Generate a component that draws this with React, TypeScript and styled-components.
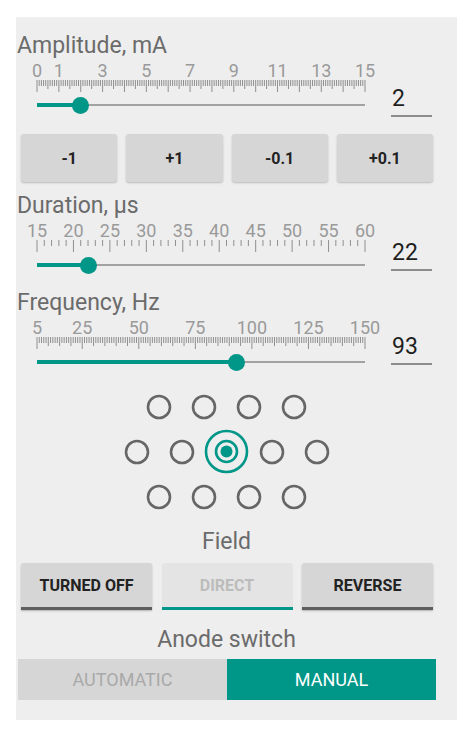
import React from "react";
import styled, { createGlobalStyle } from "styled-components";

const TEAL = "#009688";
const SCALE_W = 328;

const GlobalStyle = createGlobalStyle`
  html, body {
    margin: 0;
    padding: 0;
    background: #ffffff;
    font-family: Roboto, "Noto Sans", sans-serif;
  }
  * {
    box-sizing: border-box;
  }
`;

const Panel = styled.div`
  margin: 17px 0 0 16px;
  width: 441px;
  background: #eeeeee;
  padding: 16px 20px 20px 0;
  display: flex;
  flex-direction: column;
`;

const Block = styled.section<{ $top: number }>`
  margin-top: ${p => p.$top}px;
  display: flex;
  flex-direction: column;
`;

const Title = styled.h2`
  margin: 0 0 2px 1px;
  font-weight: 400;
  font-size: 23px;
  line-height: 26px;
  color: #6b6b6b;
`;

const SliderRow = styled.div`
  display: flex;
`;

const ScaleCol = styled.div`
  margin-left: 21px;
  width: ${SCALE_W}px;
  display: flex;
  flex-direction: column;
`;

const RulerSvg = styled.svg`
  display: block;
  overflow: visible;
`;

const Track = styled.div`
  height: 24px;
  display: flex;
  align-items: center;
`;

const Fill = styled.div`
  height: 4px;
  background: ${TEAL};
`;

const Thumb = styled.div`
  width: 17px;
  height: 17px;
  margin: 0 -8.5px;
  border-radius: 50%;
  background: ${TEAL};
  position: relative;
  z-index: 1;
`;

const Rest = styled.div`
  flex: 1;
  height: 2px;
  background: #a2a2a2;
`;

const ValueField = styled.div<{ $drop: number }>`
  margin-left: 26px;
  width: 41px;
  align-self: flex-end;
  margin-bottom: ${p => p.$drop}px;
  padding: 0 0 3px 1px;
  border-bottom: 2px solid #8c8c8c;
  font-size: 23px;
  line-height: 26px;
  color: #1e1e1e;
`;

const StepRow = styled.div`
  margin-top: 17px;
  padding: 0 4px 0 5px;
  display: flex;
  gap: 9px;
`;

const StepButton = styled.button`
  flex: 1;
  height: 48px;
  border: none;
  border-radius: 3px;
  background: #d6d6d6;
  box-shadow: 0 1px 2px rgba(0, 0, 0, 0.22);
  font-family: Roboto, sans-serif;
  font-weight: 700;
  font-size: 16px;
  color: #222222;
`;

const Electrodes = styled.div`
  margin-top: 10px;
  display: flex;
  flex-direction: column;
`;

const ElectrodeRow = styled.div`
  display: flex;
  justify-content: center;
`;

const Cell = styled.div`
  width: 45px;
  height: 45px;
  display: flex;
  align-items: center;
  justify-content: center;
`;

const Caption = styled.div<{ $top: number }>`
  margin-top: ${p => p.$top}px;
  text-align: center;
  font-size: 23px;
  line-height: 26px;
  color: #6b6b6b;
`;

const FieldRow = styled.div`
  margin-top: 8px;
  padding: 0 4px 0 5px;
  display: flex;
  gap: 9.5px;
`;

const FieldButton = styled.button<{ $selected?: boolean }>`
  flex: 1;
  height: 47px;
  border: none;
  border-radius: 3px 3px 0 0;
  border-bottom: 3px solid ${p => (p.$selected ? TEAL : "#5e5e5e")};
  background: ${p => (p.$selected ? "#e4e4e4" : "#d6d6d6")};
  box-shadow: ${p => (p.$selected ? "none" : "0 1px 2px rgba(0, 0, 0, 0.25)")};
  font-family: Roboto, sans-serif;
  font-weight: 700;
  font-size: 16px;
  color: ${p => (p.$selected ? "#bcbcbc" : "#222222")};
  padding-top: 2px;
`;

const Switch = styled.div`
  margin-top: 6px;
  padding: 0 1px 0 2px;
  display: flex;
`;

const SwitchTab = styled.button<{ $on?: boolean }>`
  flex: 1;
  height: 41px;
  border: none;
  border-radius: 0;
  background: ${p => (p.$on ? TEAL : "#d6d6d6")};
  color: ${p => (p.$on ? "#ffffff" : "#a9a9a9")};
  font-family: Roboto, sans-serif;
  font-size: 18px;
  font-weight: 400;
`;

type RulerProps = {
  count: number;
  toPos: (i: number) => number;
  kind: (i: number) => 0 | 1 | 2;
  labels: { value: string; pos: number }[];
};

const Ruler = ({ count, toPos, kind, labels }: RulerProps) => {
  const ticks = [];
  for (let i = 0; i <= count; i++) {
    const x = toPos(i) * SCALE_W;
    const k = kind(i);
    const h = k === 2 ? 12 : k === 1 ? 9 : 6;
    ticks.push(
      <line key={i} x1={x} x2={x} y1={19} y2={19 + h} stroke="#8f8f8f" strokeWidth={1} />
    );
  }
  return (
    <RulerSvg width={SCALE_W} height={32}>
      {labels.map(l => (
        <text
          key={l.value}
          x={l.pos * SCALE_W}
          y={16}
          textAnchor="middle"
          fontSize={18}
          fontFamily="Roboto, sans-serif"
          fill="#9a9a9a"
        >
          {l.value}
        </text>
      ))}
      {ticks}
    </RulerSvg>
  );
};

type SliderBlockProps = {
  title: string;
  top: number;
  min: number;
  max: number;
  value: number;
  drop: number;
  ruler: RulerProps;
};

const SliderBlock = ({ title, top, min, max, value, drop, ruler }: SliderBlockProps) => {
  const pct = ((value - min) / (max - min)) * 100;
  return (
    <Block $top={top}>
      <Title>{title}</Title>
      <SliderRow>
        <ScaleCol>
          <Ruler {...ruler} />
          <Track>
            <Fill style={{ width: `${pct}%` }} />
            <Thumb />
            <Rest />
          </Track>
        </ScaleCol>
        <ValueField $drop={drop}>{value}</ValueField>
      </SliderRow>
    </Block>
  );
};

const Electrode = ({ active }: { active?: boolean }) =>
  active ? (
    <svg width="45" height="45" viewBox="0 0 45 45">
      <circle cx="22.5" cy="22.5" r="20.5" fill="none" stroke={TEAL} strokeWidth="2.6" />
      <circle cx="22.5" cy="22.5" r="10.5" fill="none" stroke={TEAL} strokeWidth="2.6" />
      <circle cx="22.5" cy="22.5" r="6" fill={TEAL} />
    </svg>
  ) : (
    <svg width="26" height="26" viewBox="0 0 26 26">
      <circle cx="13" cy="13" r="11" fill="none" stroke="#666666" strokeWidth="2.6" />
    </svg>
  );

const ampLabels = [0, 1, 3, 5, 7, 9, 11, 13, 15].map(v => ({ value: String(v), pos: v / 15 }));
const durLabels = [15, 20, 25, 30, 35, 40, 45, 50, 55, 60].map(v => ({
  value: String(v),
  pos: (v - 15) / 45,
}));
const freqValues = [5, 25, 50, 75, 100, 125, 150];
const freqLabels = freqValues.map(v => ({ value: String(v), pos: (v - 5) / 145 }));

export default function App() {
  return (
    <>
      <GlobalStyle />
      <Panel>
        <SliderBlock
          title="Amplitude, mA"
          top={0}
          min={0}
          max={15}
          value={2}
          drop={0}
          ruler={{
            count: 150,
            toPos: i => i / 150,
            kind: i => (i % 10 === 0 ? 2 : i % 5 === 0 ? 1 : 0),
            labels: ampLabels,
          }}
        />
        <StepRow>
          <StepButton>-1</StepButton>
          <StepButton>+1</StepButton>
          <StepButton>-0.1</StepButton>
          <StepButton>+0.1</StepButton>
        </StepRow>
        <SliderBlock
          title="Duration, µs"
          top={11}
          min={15}
          max={60}
          value={22}
          drop={6}
          ruler={{
            count: 45,
            toPos: i => i / 45,
            kind: i => (i % 5 === 0 ? 2 : 0),
            labels: durLabels,
          }}
        />
        <SliderBlock
          title="Frequency, Hz"
          top={13}
          min={5}
          max={150}
          value={93}
          drop={9}
          ruler={{
            count: 145,
            toPos: i => i / 145,
            kind: i => (freqValues.includes(i + 5) ? 2 : (i + 5) % 5 === 0 ? 1 : 0),
            labels: freqLabels,
          }}
        />
        <Electrodes>
          <ElectrodeRow>
            {[0, 1, 2, 3].map(i => (
              <Cell key={i}>
                <Electrode />
              </Cell>
            ))}
          </ElectrodeRow>
          <ElectrodeRow>
            {[0, 1, 2, 3, 4].map(i => (
              <Cell key={i}>
                <Electrode active={i === 2} />
              </Cell>
            ))}
          </ElectrodeRow>
          <ElectrodeRow>
            {[0, 1, 2, 3].map(i => (
              <Cell key={i}>
                <Electrode />
              </Cell>
            ))}
          </ElectrodeRow>
        </Electrodes>
        <Caption $top={10}>Field</Caption>
        <FieldRow>
          <FieldButton>TURNED OFF</FieldButton>
          <FieldButton $selected>DIRECT</FieldButton>
          <FieldButton>REVERSE</FieldButton>
        </FieldRow>
        <Caption $top={17}>Anode switch</Caption>
        <Switch>
          <SwitchTab>AUTOMATIC</SwitchTab>
          <SwitchTab $on>MANUAL</SwitchTab>
        </Switch>
      </Panel>
    </>
  );
}
